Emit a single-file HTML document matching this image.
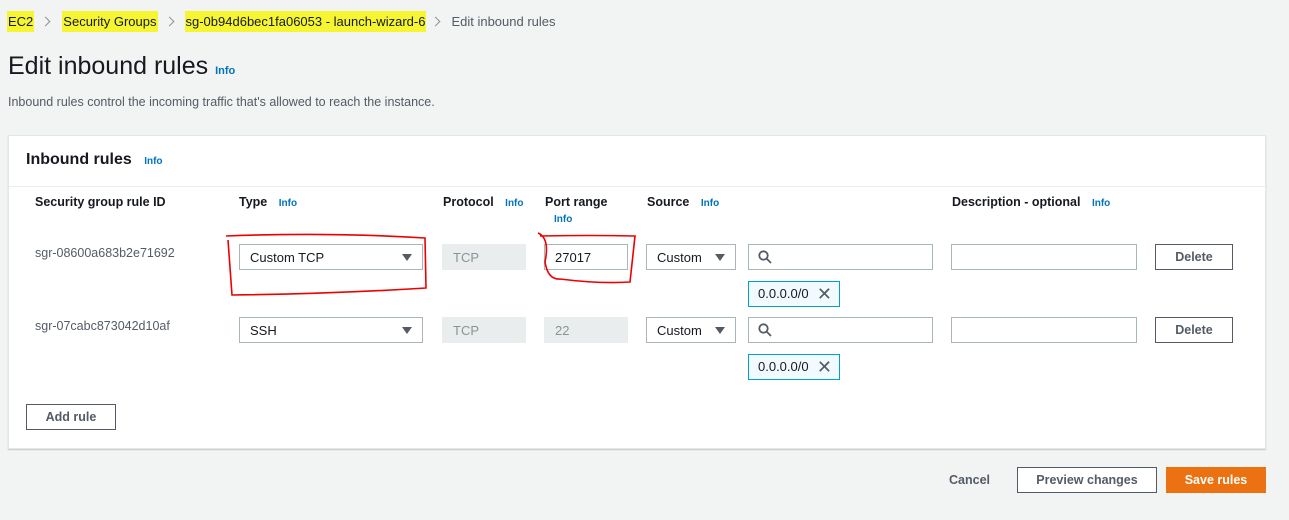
<!DOCTYPE html>
<html><head><style>
body{margin:0;width:1289px;height:520px;background:#f2f3f3;font-family:"Liberation Sans",sans-serif;color:#16191f;position:relative;overflow:hidden}
.a{position:absolute;white-space:nowrap}
.hl{background:#f5f532;padding:3px 1px}
.info{color:#0073bb;font-weight:bold;font-size:10px}
.b{font-weight:bold;font-size:12.5px}
.inp{position:absolute;height:24px;border:1px solid #aab7b8;background:#fff;box-sizing:border-box;font-size:13px;line-height:25px;padding-left:10px}
.dis{background:#eaeded;border-color:#eaeded;color:#879596}
.arr{position:absolute;right:10px;top:9px;width:0;height:0;border-left:5px solid transparent;border-right:5px solid transparent;border-top:7px solid #545b64}
.tok{position:absolute;width:92px;height:26px;border:1px solid #00a1c9;background:#f1faff;box-sizing:border-box;font-size:13px;line-height:24px;padding-left:9px}
.btn{position:absolute;height:26px;border:1px solid #545b64;background:#fff;box-sizing:border-box;font-weight:bold;font-size:12.5px;color:#545b64;text-align:center;line-height:24px}
.chev{display:inline-block;width:6px;height:6px;border-right:1.3px solid #879596;border-top:1.3px solid #879596;transform:rotate(45deg);vertical-align:1px}
</style></head><body>
<div class="a" style="left:7px;top:14px;font-size:13px;color:#16191f"><span class="hl">EC2</span><span class="chev" style="margin:0 13px 0 8px"></span><span class="hl">Security Groups</span><span class="chev" style="margin:0 12px 0 8px"></span><span class="hl">sg-0b94d6bec1fa06053 - launch-wizard-6</span><span class="chev" style="margin:0 12px 0 6px"></span><span style="color:#545b64">Edit inbound rules</span></div>
<div class="a" style="left:8px;top:52px;font-size:25px">Edit inbound rules <span class="info" style="font-size:11px">Info</span></div>
<div class="a" style="left:8px;top:95px;font-size:12.5px;color:#545b64">Inbound rules control the incoming traffic that's allowed to reach the instance.</div>
<div class="a" style="left:8px;top:135px;width:1258px;height:314px;background:#fff;border:1px solid #e4e7e7;box-sizing:border-box;box-shadow:0 1px 1px rgba(0,28,36,.2)"></div>
<div class="a" style="left:9px;top:186px;width:1256px;height:1px;background:#eaeded"></div>
<div class="a" style="left:26px;top:151px;font-size:16px;font-weight:bold">Inbound rules <span class="info" style="margin-left:8px">Info</span></div>
<div class="a b" style="left:35px;top:195px">Security group rule ID</div>
<div class="a b" style="left:239px;top:195px">Type <span class="info" style="margin-left:8px">Info</span></div>
<div class="a b" style="left:443px;top:195px">Protocol <span class="info" style="margin-left:8px">Info</span></div>
<div class="a b" style="left:545px;top:195px">Port range</div>
<div class="a info" style="left:554px;top:214px">Info</div>
<div class="a b" style="left:647px;top:195px">Source <span class="info" style="margin-left:8px">Info</span></div>
<div class="a b" style="left:952px;top:195px">Description - optional <span class="info" style="margin-left:8px">Info</span></div>

<div class="a" style="left:35px;top:246px;font-size:12.5px;color:#545b64">sgr-08600a683b2e71692</div>
<div class="inp" style="left:239px;top:244px;width:184px;height:26px">Custom TCP<div class="arr"></div></div>
<div class="inp dis" style="left:442px;top:244px;width:84px;height:26px">TCP</div>
<div class="inp" style="left:544px;top:244px;width:84px;height:26px">27017</div>
<div class="inp" style="left:646px;top:244px;width:90px;height:26px">Custom<div class="arr"></div></div>
<div class="inp" style="left:748px;top:244px;width:185px;height:26px"><svg width="14" height="14" style="position:absolute;left:9px;top:5px"><circle cx="5.5" cy="5.5" r="4.2" fill="none" stroke="#545b64" stroke-width="1.8"/><line x1="8.5" y1="8.5" x2="13" y2="13" stroke="#545b64" stroke-width="1.8"/></svg></div>
<div class="inp" style="left:951px;top:244px;width:186px;height:26px"></div>
<div class="btn" style="left:1155px;top:244px;width:78px">Delete</div>
<div class="tok" style="left:748px;top:281px">0.0.0.0/0<span style="position:absolute;right:7px;top:0;font-size:18px;color:#545b64">✕</span></div>

<div class="a" style="left:35px;top:319px;font-size:12.5px;color:#545b64">sgr-07cabc873042d10af</div>
<div class="inp" style="left:239px;top:317px;width:184px;height:26px">SSH<div class="arr"></div></div>
<div class="inp dis" style="left:442px;top:317px;width:84px;height:26px">TCP</div>
<div class="inp dis" style="left:544px;top:317px;width:84px;height:26px">22</div>
<div class="inp" style="left:646px;top:317px;width:90px;height:26px">Custom<div class="arr"></div></div>
<div class="inp" style="left:748px;top:317px;width:185px;height:26px"><svg width="14" height="14" style="position:absolute;left:9px;top:5px"><circle cx="5.5" cy="5.5" r="4.2" fill="none" stroke="#545b64" stroke-width="1.8"/><line x1="8.5" y1="8.5" x2="13" y2="13" stroke="#545b64" stroke-width="1.8"/></svg></div>
<div class="inp" style="left:951px;top:317px;width:186px;height:26px"></div>
<div class="btn" style="left:1155px;top:317px;width:78px">Delete</div>
<div class="tok" style="left:748px;top:354px">0.0.0.0/0<span style="position:absolute;right:7px;top:0;font-size:18px;color:#545b64">✕</span></div>

<div class="btn" style="left:26px;top:404px;width:90px">Add rule</div>
<div class="a b" style="left:949px;top:473px;color:#545b64">Cancel</div>
<div class="btn" style="left:1017px;top:467px;width:140px">Preview changes</div>
<div class="btn" style="left:1166px;top:467px;width:100px;background:#ec7211;border-color:#ec7211;color:#fff">Save rules</div>

<svg class="a" style="left:0;top:0" width="1289" height="520"><path d="M226 236 Q330 232 425 238 L426 288 Q330 294 232 295 L228 240" fill="none" stroke="#e00" stroke-width="1.6"/><path d="M538 233 Q550 238 545 262 Q548 280 560 279 Q600 284 630 282 L635 236 Q590 235 540 236" fill="none" stroke="#e00" stroke-width="1.6"/></svg>
</body></html>
